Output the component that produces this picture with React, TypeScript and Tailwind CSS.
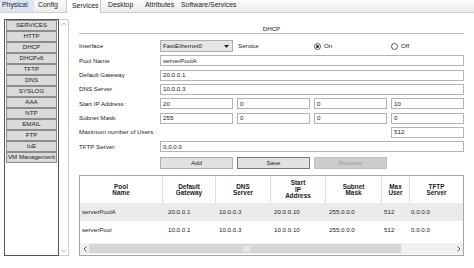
import React from 'react';

const tabs = [
  { name: 'Physical', w: 'w-[34px]', pl: 'pl-[2px]', cls: 'bg-[#d9e6f2]' },
  { name: 'Config', w: 'w-[32px]', pl: 'pl-[4px]', cls: '' },
  { name: 'Services', w: 'w-[35px]', pl: 'pl-[5px]', cls: 'bg-white border-x border-t border-[#c9c9c9] h-[14px] -mb-[1px]' },
  { name: 'Desktop', w: 'w-[39px]', pl: 'pl-[7px]', cls: '' },
  { name: 'Attributes', w: 'w-[36px]', pl: 'pl-[5px]', cls: '' },
  { name: 'Software/Services', w: 'w-[64px]', pl: 'pl-[5px]', cls: '' },
];

const services = ['SERVICES', 'HTTP', 'DHCP', 'DHCPv6', 'TFTP', 'DNS', 'SYSLOG', 'AAA', 'NTP', 'EMAIL', 'FTP', 'IoE', 'VM Management'];

const pools = [
  { name: 'serverPoolA', gw: '20.0.0.1', dns: '10.0.0.3', start: '20.0.0.10', mask: '255.0.0.0', max: '512', tftp: '0.0.0.0' },
  { name: 'serverPool', gw: '10.0.0.1', dns: '10.0.0.3', start: '10.0.0.10', mask: '255.0.0.0', max: '512', tftp: '0.0.0.0' },
];

const cols = 'grid grid-cols-[83px_53px_55px_55px_56px_28px_53px]';

const Input = ({ value, className = '' }: { value?: string; className?: string }) => (
  <div className={`h-[11px] bg-white border border-[#b4b4b4] flex items-center pl-[2px] ${className}`}>{value}</div>
);

const Radio = ({ checked }: { checked?: boolean }) => (
  <span className="w-[7px] h-[7px] rounded-full border border-[#555] bg-white flex items-center justify-center">
    {checked && <span className="w-[3px] h-[3px] rounded-full bg-[#222]" />}
  </span>
);

const Row = ({ label, children }: { label: string; children: React.ReactNode }) => (
  <div className="flex items-center h-[11px]">
    <div className="w-[81px]">{label}</div>
    <div className="flex-1">{children}</div>
  </div>
);

export default function App() {
  return (
    <div className="w-[474px] h-[268px] bg-white overflow-hidden font-['Liberation_Sans',Arial,sans-serif] text-[6.2px] leading-none text-[#222]">
      {/* tab bar */}
      <div className="h-[13px] flex items-end bg-gradient-to-b from-[#fbfbfb] to-[#ececec] border-b border-[#cfcfcf] text-[6.9px]">
        {tabs.map((t) => (
          <div key={t.name} className={`${t.w} ${t.pl} h-[13px] flex items-center ${t.cls}`}>
            {t.name}
          </div>
        ))}
      </div>

      <div className="flex">
        {/* left list */}
        <div className="w-[75px] pl-[4px] pt-[6px]">
          <div className="flex h-[237px]">
            <div className="w-[55px] border border-[#555] bg-white flex flex-col pl-[1px] pr-[1px]">
              {services.map((s) => (
                <div key={s} className="h-[11px] bg-[#dadada] border border-[#8c8c8c] flex items-center justify-center">
                  {s}
                </div>
              ))}
            </div>
            <div className="w-[10px] border-y border-r border-[#cdcdcd] flex flex-col items-center justify-between py-[2px]">
              <svg width="6" height="4" viewBox="0 0 6 4"><path d="M0.5 3.5 L3 1 L5.5 3.5" fill="none" stroke="#a8a8a8" strokeWidth="0.8" /></svg>
              <svg width="6" height="4" viewBox="0 0 6 4"><path d="M0.5 0.5 L3 3 L5.5 0.5" fill="none" stroke="#a8a8a8" strokeWidth="0.8" /></svg>
            </div>
          </div>
        </div>

        {/* main */}
        <div className="w-[385px] ml-[4px]">
          <div className="h-[21px] border-b border-[#bdbdbd] flex justify-center pt-[13px]">DHCP</div>

          <div className="mt-[6px] flex flex-col gap-[3.33px]">
            <div className="flex items-center h-[12px]">
              <div className="w-[81px]">Interface</div>
              <div className="flex-1 grid grid-cols-4 gap-[4px] items-center">
                <div className="h-[12px] bg-[#e6e6e6] border border-[#adadad] flex items-center justify-between pl-[2px] pr-[3px]">
                  <span>FastEthernet0</span>
                  <svg width="5" height="3" viewBox="0 0 5 3"><path d="M0 0 H5 L2.5 3 Z" fill="#222" /></svg>
                </div>
                <div className="pl-[1px]">Service</div>
                <div className="flex items-center gap-[3px]"><Radio checked /> On</div>
                <div className="flex items-center gap-[3px]"><Radio /> Off</div>
              </div>
            </div>
            <Row label="Pool Name"><Input value="serverPoolA" /></Row>
            <Row label="Default Gateway"><Input value="20.0.0.1" /></Row>
            <Row label="DNS Server"><Input value="10.0.0.3" /></Row>
            <Row label="Start IP Address :">
              <div className="grid grid-cols-4 gap-[4px]">
                <Input value="20" /><Input value="0" /><Input value="0" /><Input value="10" />
              </div>
            </Row>
            <Row label="Subnet Mask:">
              <div className="grid grid-cols-4 gap-[4px]">
                <Input value="255" /><Input value="0" /><Input value="0" /><Input value="0" />
              </div>
            </Row>
            <Row label="Maximum number of Users :">
              <div className="grid grid-cols-4 gap-[4px]">
                <div /><div /><div /><Input value="512" />
              </div>
            </Row>
            <Row label="TFTP Server:"><Input value="0.0.0.0" /></Row>
          </div>

          <div className="mt-[5px] flex">
            <div className="w-[81px]" />
            <div className="flex-1 grid grid-cols-4 gap-[4px]">
              <button className="h-[12px] bg-[#e1e1e1] border border-[#adadad] flex items-center justify-center">Add</button>
              <button className="h-[12px] bg-[#e1e1e1] border border-[#7a7a7a] flex items-center justify-center">Save</button>
              <button className="h-[12px] bg-[#cccccc] border border-[#bfbfbf] text-[#9a9a9a] flex items-center justify-center">Remove</button>
            </div>
          </div>

          {/* table */}
          <div className="mt-[6px] h-[81px] border border-[#a5a5a5] flex flex-col">
            <div className={`${cols} h-[27px] font-bold text-[6.4px] leading-[6.3px]`}>
              {[
                ['Pool', 'Name'],
                ['Default', 'Gateway'],
                ['DNS', 'Server'],
                ['Start', 'IP', 'Address'],
                ['Subnet', 'Mask'],
                ['Max', 'User'],
                ['TFTP', 'Server'],
              ].map((h, i) => (
                <div key={i} className={`flex flex-col items-center justify-center ${i < 6 ? 'border-r border-[#dedede]' : ''}`}>
                  {h.map((l) => <span key={l}>{l}</span>)}
                </div>
              ))}
            </div>
            {pools.map((p, i) => (
              <div key={p.name} className={`${cols} h-[18px] items-center ${i === 0 ? 'bg-[#ebebeb]' : ''}`}>
                <span className="pl-[2px]">{p.name}</span>
                <span className="pl-[5px]">{p.gw}</span>
                <span className="pl-[3px]">{p.dns}</span>
                <span className="pl-[3px]">{p.start}</span>
                <span className="pl-[3px]">{p.mask}</span>
                <span className="pl-[2px]">{p.max}</span>
                <span className="pl-[1px]">{p.tftp}</span>
              </div>
            ))}
            <div className="flex-1" />
            <div className="h-[11px] flex items-center bg-[#f0f0f0] mb-[1px]">
              <div className="w-[9px] flex justify-center">
                <svg width="4" height="6" viewBox="0 0 4 6"><path d="M3.5 0.5 L1 3 L3.5 5.5" fill="none" stroke="#333" strokeWidth="0.8" /></svg>
              </div>
              <div className="w-[312px] h-[9px] bg-[#d6d6d6] flex items-center pl-[154px]">
                <div className="w-[7px] h-[6px] bg-[#e6e6e6]" />
              </div>
              <div className="flex-1" />
              <div className="w-[9px] flex justify-center">
                <svg width="4" height="6" viewBox="0 0 4 6"><path d="M0.5 0.5 L3 3 L0.5 5.5" fill="none" stroke="#333" strokeWidth="0.8" /></svg>
              </div>
            </div>
          </div>
        </div>
      </div>
    </div>
  );
}
